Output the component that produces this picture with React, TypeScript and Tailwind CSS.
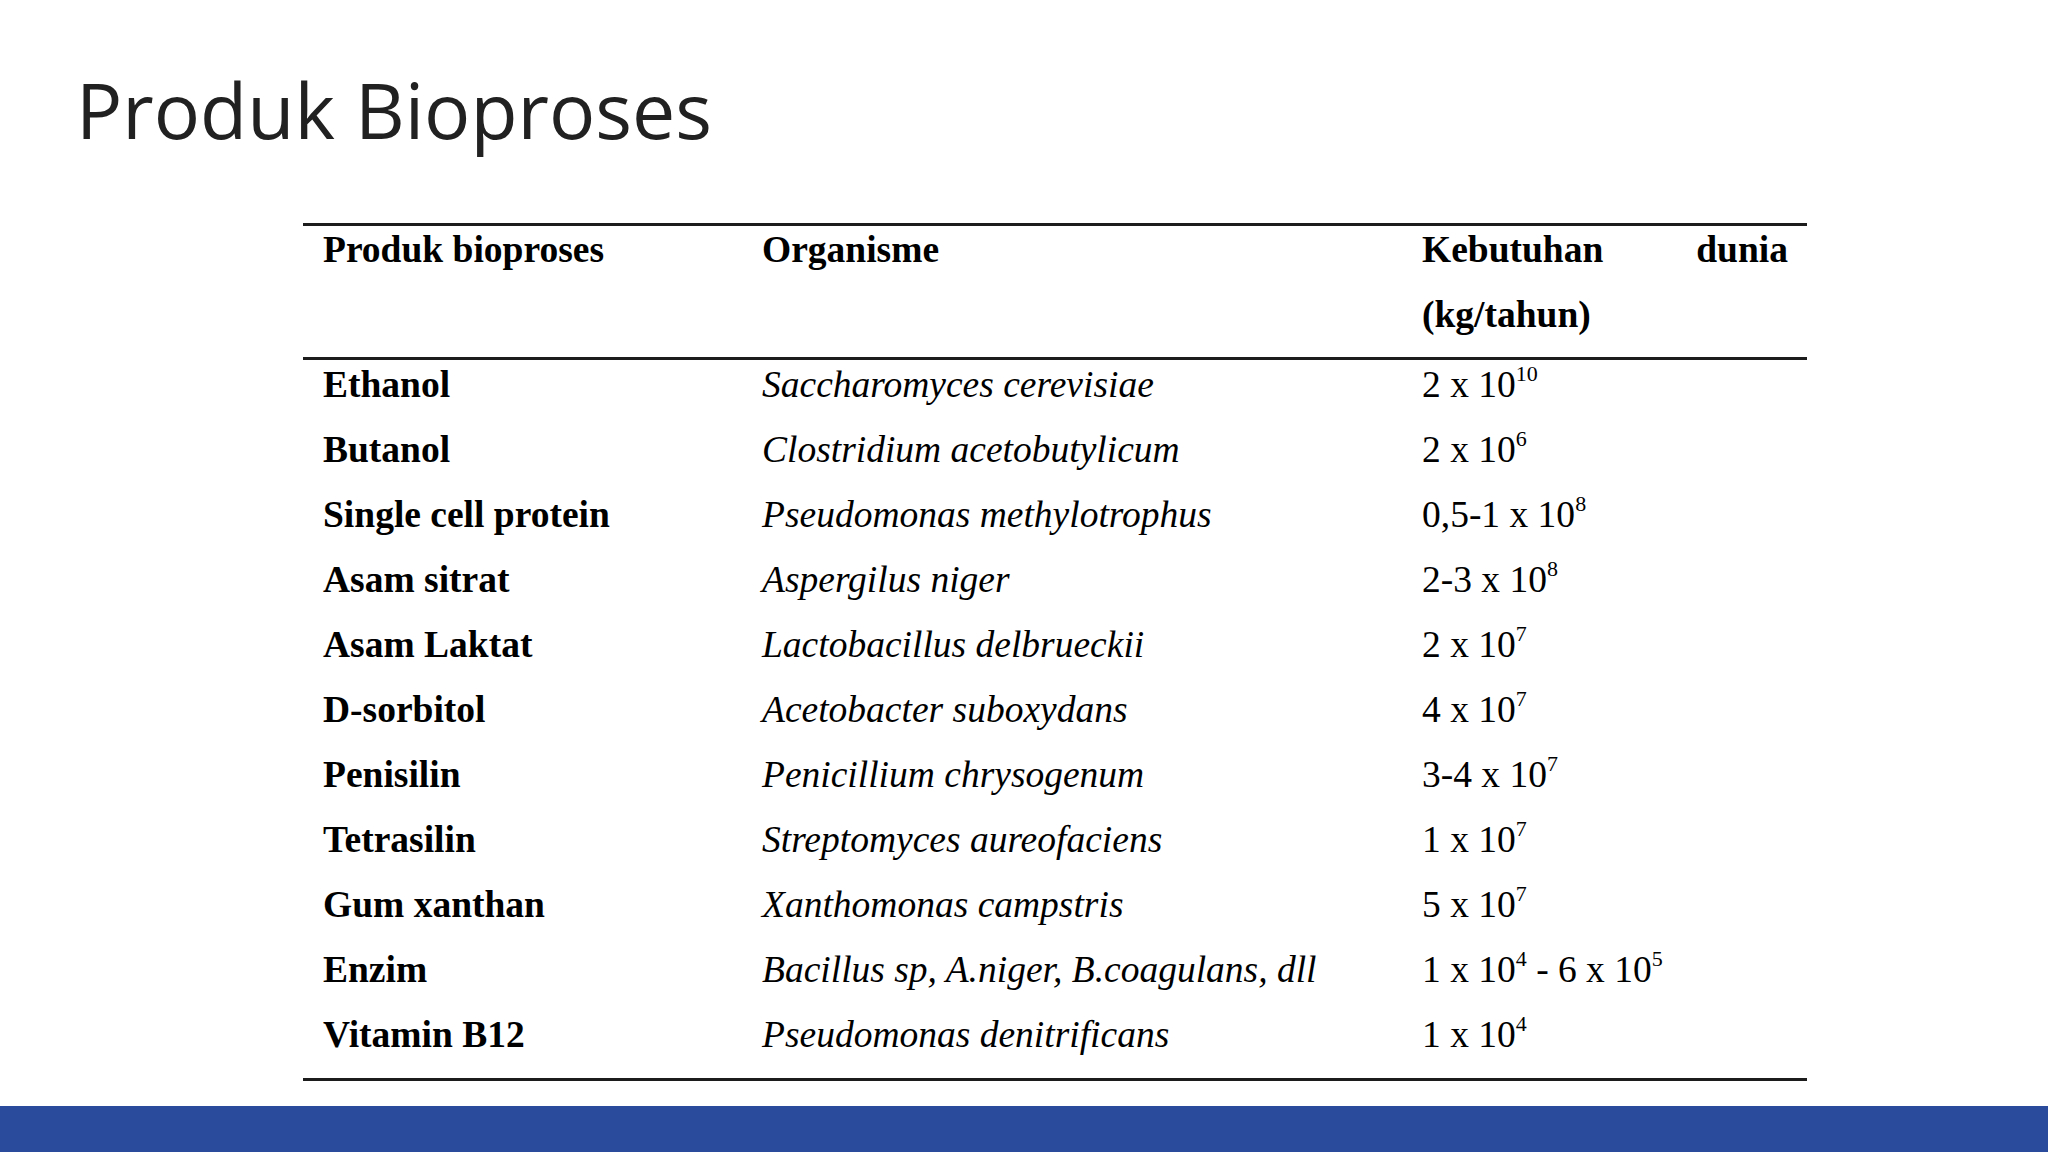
import React from "react";

type Part = { t: string; sup: string };

const rows: { product: string; organism: string; value: Part[] }[] = [
  { product: "Ethanol", organism: "Saccharomyces cerevisiae", value: [{ t: "2 x 10", sup: "10" }] },
  { product: "Butanol", organism: "Clostridium acetobutylicum", value: [{ t: "2 x 10", sup: "6" }] },
  { product: "Single cell protein", organism: "Pseudomonas methylotrophus", value: [{ t: "0,5-1 x 10", sup: "8" }] },
  { product: "Asam sitrat", organism: "Aspergilus niger", value: [{ t: "2-3 x 10", sup: "8" }] },
  { product: "Asam Laktat", organism: "Lactobacillus delbrueckii", value: [{ t: "2 x 10", sup: "7" }] },
  { product: "D-sorbitol", organism: "Acetobacter suboxydans", value: [{ t: "4 x 10", sup: "7" }] },
  { product: "Penisilin", organism: "Penicillium chrysogenum", value: [{ t: "3-4 x 10", sup: "7" }] },
  { product: "Tetrasilin", organism: "Streptomyces aureofaciens", value: [{ t: "1 x 10", sup: "7" }] },
  { product: "Gum xanthan", organism: "Xanthomonas campstris", value: [{ t: "5 x 10", sup: "7" }] },
  {
    product: "Enzim",
    organism: "Bacillus sp, A.niger, B.coagulans, dll",
    value: [
      { t: "1 x 10", sup: "4" },
      { t: "\u00a0- 6 x 10", sup: "5" },
    ],
  },
  { product: "Vitamin B12", organism: "Pseudomonas denitrificans", value: [{ t: "1 x 10", sup: "4" }] },
];

const serif = "font-['Liberation_Serif','Times_New_Roman',serif]";

export default function App() {
  return (
    <div className="w-full h-[1152px] bg-white flex flex-col overflow-hidden">
      <main className="flex-1">
        {/* Slide title */}
        <h1 className="pt-[72px] pl-[76px] text-[77px] leading-[76px] text-[#212121] font-['Open_Sans',sans-serif] font-normal">
          Produk Bioproses
        </h1>

        {/* Table */}
        <div className={`mt-[75px] ml-[303px] w-[1504px] text-black text-[37.5px] ${serif}`}>
          <div className="grid grid-cols-[439px_659px_406px] border-t-[3px] border-b-[3px] border-[#1c1c1c] font-bold">
            <div className="pl-[20px] leading-[47px]">Produk bioproses</div>
            <div className="pl-[20px] leading-[47px]">Organisme</div>
            <div className="pl-[21px] pr-[19px] pb-[10px]">
              <div className="flex justify-between leading-[47px]">
                <span>Kebutuhan</span>
                <span>dunia</span>
              </div>
              <div className="mt-[9px] leading-[65px]">(kg/tahun)</div>
            </div>
          </div>

          <div className="border-b-[3px] border-[#1c1c1c] pb-[3px]">
            {rows.map((r) => (
              <div key={r.product} className="grid grid-cols-[439px_659px_406px] h-[65px] leading-[49px]">
                <div className="pl-[20px] font-bold">{r.product}</div>
                <div className="pl-[20px] italic">{r.organism}</div>
                <div className="pl-[21px]">
                  {r.value.map((p, i) => (
                    <span key={i}>
                      {p.t}
                      <sup className="relative -top-[16px] text-[22px]">{p.sup}</sup>
                    </span>
                  ))}
                </div>
              </div>
            ))}
          </div>
        </div>
      </main>

      <footer className="h-[46px] bg-[#2a4b9b]" />
    </div>
  );
}
